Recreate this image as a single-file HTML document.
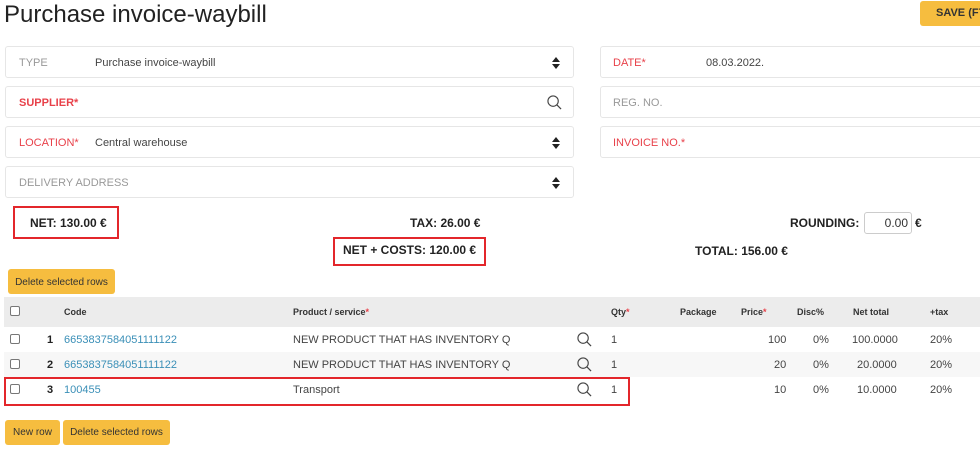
<!DOCTYPE html>
<html><head><style>
*{box-sizing:border-box;margin:0;padding:0}
body{width:980px;height:461px;overflow:hidden;background:#fff;font-family:"Liberation Sans",sans-serif;color:#333;position:relative}
.a{position:absolute;white-space:nowrap}
.f{position:absolute;border:1px solid #e6e6e6;border-radius:3px;height:32px;background:#fff}
.l{position:absolute;top:10px;font-size:11px;color:#999}
.r{color:#e8414a}
.v{position:absolute;top:10px;font-size:11px;color:#444}
.b{font-weight:bold;font-size:12px;color:#222}
.btn{position:absolute;background:#f6bd3f;border-radius:3px;font-size:10px;color:#333;text-align:center;line-height:25px}
.box{position:absolute;border:2px solid #e3262b}
.cb{position:absolute;width:10px;height:10px;border:1px solid #777;border-radius:2px;background:#fff}
.t{font-size:11px;color:#444}
.h{font-size:9px;font-weight:bold;color:#333}
.lk{color:#3a8fb7}
.s{position:absolute;width:15px;height:15px}
.arr{position:absolute;width:8px;height:14px}
</style></head><body>
<div class="a" style="left:4px;top:1px;font-size:24px;color:#222">Purchase invoice-waybill</div>
<div class="btn" style="left:920px;top:1px;width:70px;height:25px;font-weight:bold;font-size:11px;line-height:25px;text-align:left;padding-left:16px">SAVE (F7)</div>

<div class="f" style="left:5px;top:46px;width:569px"><span class="l" style="left:13px">TYPE</span><span class="v" style="left:89px">Purchase invoice-waybill</span>
<svg class="arr" style="left:546px;top:9px" viewBox="0 0 8 14"><path d="M0 6L4 1L8 6Z M0 8L4 13L8 8Z" fill="#222"/></svg></div>
<div class="f" style="left:5px;top:86px;width:569px"><span class="l r" style="left:13px;font-weight:bold">SUPPLIER*</span>
<svg class="s" style="left:541px;top:8px" viewBox="0 0 16 16"><circle cx="6.5" cy="6.5" r="5.5" fill="none" stroke="#444" stroke-width="1.2"/><path d="M10.5 10.5L15 15" stroke="#444" stroke-width="1.3"/></svg></div>
<div class="f" style="left:5px;top:126px;width:569px"><span class="l r" style="left:13px">LOCATION*</span><span class="v" style="left:89px">Central warehouse</span>
<svg class="arr" style="left:546px;top:9px" viewBox="0 0 8 14"><path d="M0 6L4 1L8 6Z M0 8L4 13L8 8Z" fill="#222"/></svg></div>
<div class="f" style="left:5px;top:166px;width:569px"><span class="l" style="left:13px">DELIVERY ADDRESS</span>
<svg class="arr" style="left:546px;top:9px" viewBox="0 0 8 14"><path d="M0 6L4 1L8 6Z M0 8L4 13L8 8Z" fill="#222"/></svg></div>

<div class="f" style="left:600px;top:46px;width:400px"><span class="l r" style="left:12px">DATE*</span><span class="v" style="left:105px">08.03.2022.</span></div>
<div class="f" style="left:600px;top:86px;width:400px"><span class="l" style="left:12px">REG. NO.</span></div>
<div class="f" style="left:600px;top:126px;width:400px"><span class="l r" style="left:12px">INVOICE NO.*</span></div>

<div class="a b" style="left:30px;top:216px">NET: 130.00 €</div>
<div class="box" style="left:13px;top:206px;width:106px;height:33px"></div>
<div class="a b" style="left:410px;top:216px">TAX: 26.00 €</div>
<div class="a b" style="left:343px;top:243px">NET + COSTS: 120.00 €</div>
<div class="box" style="left:333px;top:237px;width:153px;height:29px"></div>
<div class="a b" style="left:790px;top:216px">ROUNDING:</div>
<div class="a" style="left:864px;top:212px;width:48px;height:22px;border:1px solid #ccc;border-radius:3px;font-size:12px;text-align:right;padding-right:3px;line-height:20px;color:#333">0.00</div>
<div class="a b" style="left:915px;top:216px">€</div>
<div class="a b" style="left:695px;top:244px">TOTAL: 156.00 €</div>

<div class="btn" style="left:8px;top:269px;width:107px;height:25px;line-height:27px">Delete selected rows</div>

<div class="a" style="left:4px;top:297px;width:976px;height:30px;background:#ececec"></div>
<div class="a" style="left:4px;top:352px;width:976px;height:25px;background:#f7f7f7"></div>
<div class="cb" style="left:10px;top:306px"></div>
<div class="a h" style="left:64px;top:307px">Code</div>
<div class="a h" style="left:293px;top:307px">Product / service<span class="r">*</span></div>
<div class="a h" style="left:611px;top:307px">Qty<span class="r">*</span></div>
<div class="a h" style="left:680px;top:307px">Package</div>
<div class="a h" style="left:741px;top:307px">Price<span class="r">*</span></div>
<div class="a h" style="left:797px;top:307px">Disc%</div>
<div class="a h" style="left:853px;top:307px">Net total</div>
<div class="a h" style="left:930px;top:307px">+tax</div>

<div class="cb" style="left:10px;top:334px"></div><div class="a b" style="left:47px;top:334px;font-size:11px">1</div>
<div class="a t lk" style="left:64px;top:334px">6653837584051111122</div><div class="a t" style="left:293px;top:334px">NEW PRODUCT THAT HAS INVENTORY Q</div>
<svg class="s" style="left:577px;top:332px" viewBox="0 0 16 16"><circle cx="6.5" cy="6.5" r="5.5" fill="none" stroke="#444" stroke-width="1.2"/><path d="M10.5 10.5L15 15" stroke="#444" stroke-width="1.3"/></svg>
<div class="a t" style="left:611px;top:334px">1</div><div class="a t" style="left:768px;top:334px">100</div><div class="a t" style="left:813px;top:334px">0%</div><div class="a t" style="left:852px;top:334px">100.0000</div><div class="a t" style="left:930px;top:334px">20%</div>

<div class="cb" style="left:10px;top:359px"></div><div class="a b" style="left:47px;top:359px;font-size:11px">2</div>
<div class="a t lk" style="left:64px;top:359px">6653837584051111122</div><div class="a t" style="left:293px;top:359px">NEW PRODUCT THAT HAS INVENTORY Q</div>
<svg class="s" style="left:577px;top:357px" viewBox="0 0 16 16"><circle cx="6.5" cy="6.5" r="5.5" fill="none" stroke="#444" stroke-width="1.2"/><path d="M10.5 10.5L15 15" stroke="#444" stroke-width="1.3"/></svg>
<div class="a t" style="left:611px;top:359px">1</div><div class="a t" style="left:774px;top:359px">20</div><div class="a t" style="left:813px;top:359px">0%</div><div class="a t" style="left:857px;top:359px">20.0000</div><div class="a t" style="left:930px;top:359px">20%</div>

<div class="cb" style="left:10px;top:384px"></div><div class="a b" style="left:47px;top:384px;font-size:11px">3</div>
<div class="a t lk" style="left:64px;top:384px">100455</div><div class="a t" style="left:293px;top:384px">Transport</div>
<svg class="s" style="left:577px;top:382px" viewBox="0 0 16 16"><circle cx="6.5" cy="6.5" r="5.5" fill="none" stroke="#444" stroke-width="1.2"/><path d="M10.5 10.5L15 15" stroke="#444" stroke-width="1.3"/></svg>
<div class="a t" style="left:611px;top:384px">1</div><div class="a t" style="left:774px;top:384px">10</div><div class="a t" style="left:813px;top:384px">0%</div><div class="a t" style="left:857px;top:384px">10.0000</div><div class="a t" style="left:930px;top:384px">20%</div>
<div class="box" style="left:4px;top:377px;width:626px;height:29px"></div>

<div class="btn" style="left:5px;top:420px;width:55px;height:25px;line-height:26px">New row</div>
<div class="btn" style="left:63px;top:420px;width:107px;height:25px;line-height:26px">Delete selected rows</div>
</body></html>
